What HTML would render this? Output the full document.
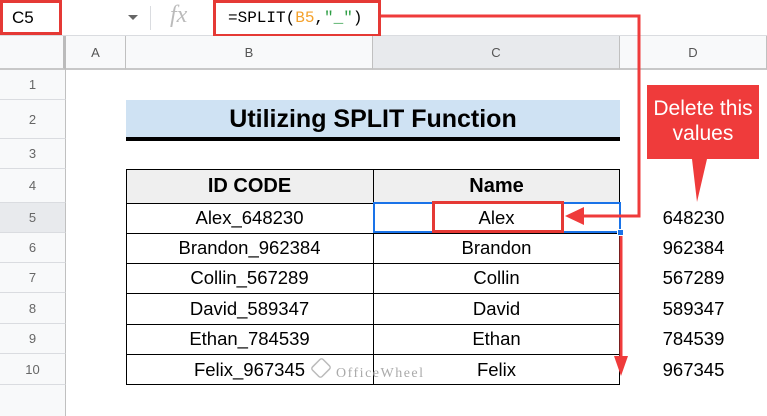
<!DOCTYPE html>
<html><head><meta charset="utf-8"><style>
*{margin:0;padding:0;box-sizing:border-box}
body{width:767px;height:416px;overflow:hidden;background:#fff;font-family:"Liberation Sans",Arial,sans-serif;position:relative}
.a{position:absolute}
.rh{position:absolute;left:0;width:66px;background:#f8f9fa;border-bottom:1px solid #dadce0;border-right:1px solid #c0c0c0;color:#666;font-size:13px;text-align:center}
.ch{position:absolute;top:36px;height:34px;background:#f8f9fa;border-right:1px solid #c0c0c0;border-bottom:2px solid #c8c8c8;color:#555;font-size:13px;text-align:center;line-height:34px}
.c{position:absolute;font-size:18.5px;color:#000;text-align:center;white-space:nowrap}
</style></head><body>
<div class="a" style="left:0;top:0;width:767px;height:36px;background:#fff;border-bottom:1px solid #dadce0"></div>
<div class="a" style="left:0;top:0;width:62px;height:35px;border:3px solid #e53935;font-size:17px;line-height:29px;padding-left:9px">C5</div>
<div class="a" style="left:128px;top:15px;width:0;height:0;border-left:5px solid transparent;border-right:5px solid transparent;border-top:5px solid #666"></div>
<div class="a" style="left:150px;top:6px;width:1px;height:24px;background:#dadce0"></div>
<div class="a" style="left:170px;top:2px;font-family:'Liberation Serif',serif;font-style:italic;font-size:24px;color:#bbb">fx</div>
<div class="a" style="left:213px;top:0;width:168px;height:37px;border:3px solid #e53935;font-family:'Liberation Mono',monospace;font-size:16px;line-height:31px;padding-left:12px">=SPLIT(<span style="color:#f4a12b">B5</span>,<span style="color:#2e9e44">"_"</span>)</div>
<div class="ch" style="left:0;width:66px;border-right:3px solid #bbb"></div>
<div class="ch" style="left:66px;width:60px">A</div>
<div class="ch" style="left:126px;width:247px">B</div>
<div class="ch" style="left:373px;width:247px;background:#e8eaed">C</div>
<div class="ch" style="left:620px;width:147px">D</div>
<div class="rh" style="top:70px;height:30px;line-height:30px">1</div>
<div class="rh" style="top:100px;height:39px;line-height:39px">2</div>
<div class="rh" style="top:139px;height:30px;line-height:30px">3</div>
<div class="rh" style="top:169px;height:34px;line-height:34px">4</div>
<div class="rh" style="top:203px;height:30px;line-height:30px;background:#e8eaed">5</div>
<div class="rh" style="top:233px;height:30px;line-height:30px">6</div>
<div class="rh" style="top:263px;height:30px;line-height:30px">7</div>
<div class="rh" style="top:293px;height:31px;line-height:31px">8</div>
<div class="rh" style="top:324px;height:30px;line-height:30px">9</div>
<div class="rh" style="top:354px;height:31px;line-height:31px">10</div>
<div class="rh" style="top:385px;height:31px;border-bottom:none"></div>
<div class="a" style="left:126px;top:100px;width:494px;height:38px;background:#cfe2f3;font-weight:bold;font-size:25px;text-align:center;line-height:38px">Utilizing SPLIT Function</div>
<div class="a" style="left:126px;top:137px;width:494px;height:4px;background:#000"></div>
<div class="a" style="left:126px;top:169px;width:494px;height:216px;border:1px solid #000"></div>
<div class="a" style="left:127px;top:170px;width:492px;height:33px;background:#efefef"></div>
<div class="a" style="left:373px;top:169px;width:1px;height:216px;background:#000"></div>
<div class="a" style="left:126px;top:203px;width:494px;height:1px;background:#000"></div>
<div class="a" style="left:126px;top:233px;width:494px;height:1px;background:#000"></div>
<div class="a" style="left:126px;top:263px;width:494px;height:1px;background:#000"></div>
<div class="a" style="left:126px;top:293px;width:494px;height:1px;background:#000"></div>
<div class="a" style="left:126px;top:324px;width:494px;height:1px;background:#000"></div>
<div class="a" style="left:126px;top:354px;width:494px;height:1px;background:#000"></div>
<div class="c" style="left:126px;top:169px;width:247px;line-height:34px;font-weight:bold;font-size:20px">ID CODE</div>
<div class="c" style="left:373px;top:169px;width:247px;line-height:34px;font-weight:bold;font-size:20px">Name</div>
<div class="c" style="left:126px;top:203px;width:247px;line-height:30px">Alex_648230</div>
<div class="c" style="left:126px;top:233px;width:247px;line-height:30px">Brandon_962384</div>
<div class="c" style="left:126px;top:263px;width:247px;line-height:30px">Collin_567289</div>
<div class="c" style="left:126px;top:293px;width:247px;line-height:31px">David_589347</div>
<div class="c" style="left:126px;top:324px;width:247px;line-height:30px">Ethan_784539</div>
<div class="c" style="left:126px;top:354px;width:247px;line-height:31px">Felix_967345</div>
<div class="c" style="left:373px;top:203px;width:247px;line-height:30px">Alex</div>
<div class="c" style="left:373px;top:233px;width:247px;line-height:30px">Brandon</div>
<div class="c" style="left:373px;top:263px;width:247px;line-height:30px">Collin</div>
<div class="c" style="left:373px;top:293px;width:247px;line-height:31px">David</div>
<div class="c" style="left:373px;top:324px;width:247px;line-height:30px">Ethan</div>
<div class="c" style="left:373px;top:354px;width:247px;line-height:31px">Felix</div>
<div class="c" style="left:620px;top:203px;width:147px;line-height:30px">648230</div>
<div class="c" style="left:620px;top:233px;width:147px;line-height:30px">962384</div>
<div class="c" style="left:620px;top:263px;width:147px;line-height:30px">567289</div>
<div class="c" style="left:620px;top:293px;width:147px;line-height:31px">589347</div>
<div class="c" style="left:620px;top:324px;width:147px;line-height:30px">784539</div>
<div class="c" style="left:620px;top:354px;width:147px;line-height:31px">967345</div>
<div class="a" style="left:373px;top:202px;width:248px;height:31px;border:2px solid #1a73e8"></div>
<div class="a" style="left:617px;top:229px;width:7px;height:7px;background:#1a73e8;border:1px solid #fff"></div>
<div class="a" style="left:432px;top:201px;width:132px;height:32px;border:3px solid #e53935"></div>
<div class="a" style="left:311px;top:357px;width:20px;height:22px;border:2px solid #bbb;border-radius:4px;transform:rotate(45deg) scale(.75)"></div>
<div class="a" style="left:336px;top:366px;font-family:'Liberation Serif',serif;font-size:14px;letter-spacing:1.5px;color:#aaa">OfficeWheel</div>
<svg class="a" style="left:0;top:0" width="767" height="416">
<polyline points="381,16 639,16 639,216 578,216" fill="none" stroke="#ef3b3b" stroke-width="3"/>
<polygon points="565,216 584,207 584,225" fill="#ef3b3b"/>
<line x1="621" y1="236" x2="621" y2="360" stroke="#ef3b3b" stroke-width="3"/>
<polygon points="621,376 614,356 628,356" fill="#ef3b3b"/>
<polygon points="647,85 759,85 759,159 707,159 697,202 692,159 647,159" fill="#ef3b3b"/>
<text x="703" y="115" fill="#fff" font-family="Liberation Sans,sans-serif" font-size="21" text-anchor="middle">Delete this</text>
<text x="703" y="140" fill="#fff" font-family="Liberation Sans,sans-serif" font-size="21" text-anchor="middle">values</text>
</svg>
</body></html>
